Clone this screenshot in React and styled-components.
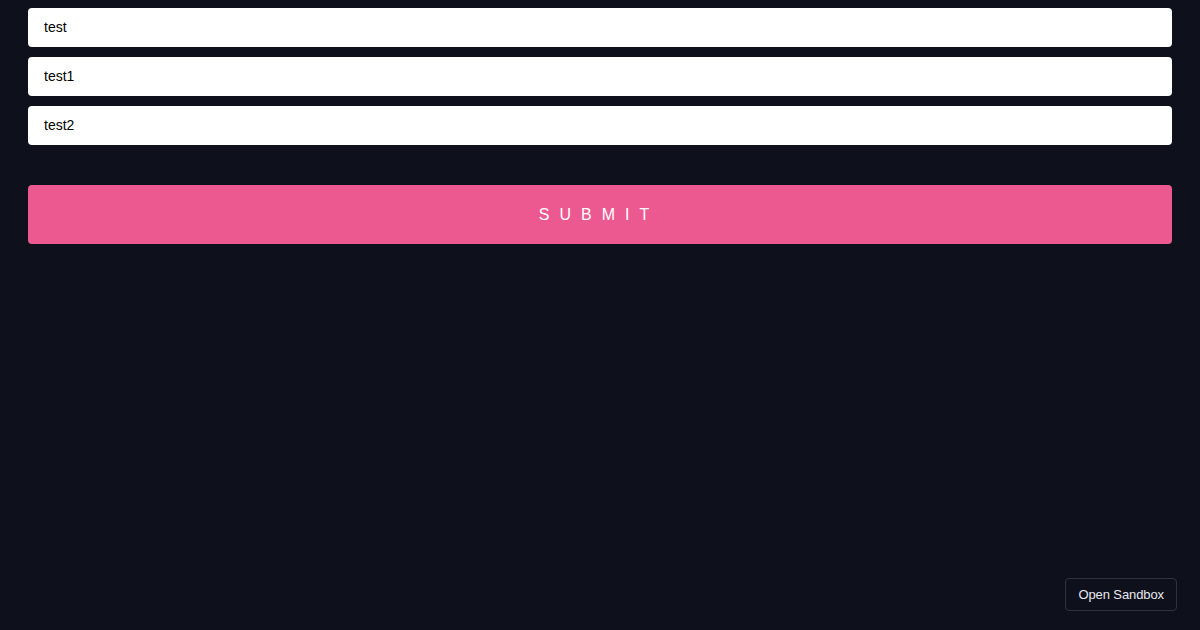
import styled, { createGlobalStyle } from 'styled-components'

const GlobalStyle = createGlobalStyle`
    html, body {
        margin: 0;
        padding: 0;
        background: #0e101c;
        font-family: "Liberation Sans", Arial, sans-serif;
    }
`

const Page = styled.div`
    min-height: 630px;
    box-sizing: border-box;
    padding: 8px 28px;
    position: relative;
`

const Form = styled.form`
    display: flex;
    flex-direction: column;
    gap: 10px;
`

const Input = styled.input`
    display: block;
    box-sizing: border-box;
    width: 100%;
    height: 39px;
    border: none;
    border-radius: 4px;
    background: #fff;
    padding: 0 16px 1px;
    font-family: "Liberation Sans", Arial, sans-serif;
    font-size: 14px;
    color: #000;
    outline: none;
`

const SubmitButton = styled.button`
    margin-top: 30px;
    height: 59px;
    border: none;
    border-radius: 4px;
    background: #ec5990;
    color: #fff;
    font-family: "Liberation Sans", Arial, sans-serif;
    font-size: 16px;
    font-weight: 300;
    text-transform: uppercase;
    letter-spacing: 10px;
    padding-left: 4px;
    cursor: pointer;
`

const SandboxLink = styled.a`
    position: absolute;
    right: 23px;
    bottom: 19px;
    box-sizing: border-box;
    height: 33px;
    padding: 0 12px 0 12px;
    display: flex;
    align-items: center;
    border: 1px solid #30323b;
    border-radius: 4px;
    color: #e8e8ec;
    font-size: 13px;
    letter-spacing: -0.1px;
    text-decoration: none;
    background: #0e101c;
`

function App() {
    return (
        <Page>
            <GlobalStyle />
            <Form onSubmit={(e) => e.preventDefault()}>
                <Input defaultValue="test" />
                <Input defaultValue="test1" />
                <Input defaultValue="test2" />
                <SubmitButton type="submit">Submit</SubmitButton>
            </Form>
            <SandboxLink href="#">Open Sandbox</SandboxLink>
        </Page>
    )
}

export default App
